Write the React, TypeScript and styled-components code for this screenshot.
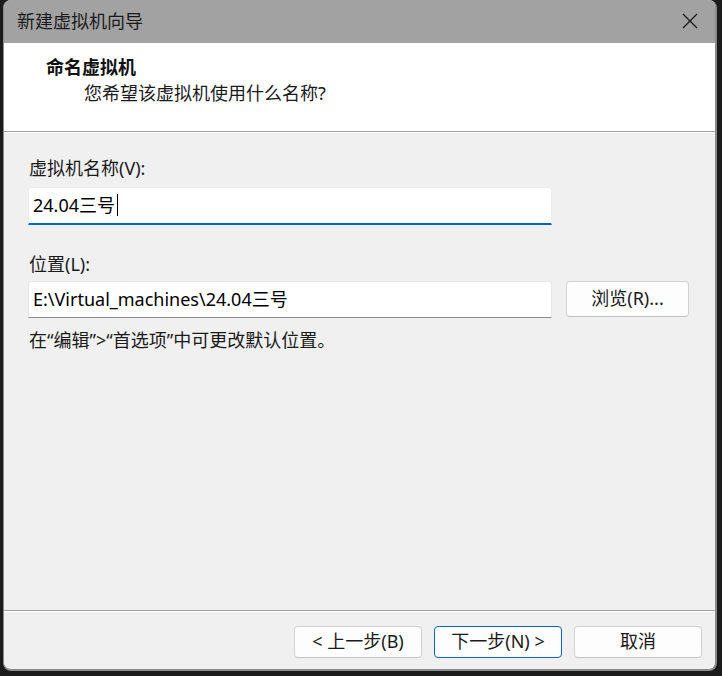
import styled, { createGlobalStyle } from 'styled-components';

const GlobalStyle = createGlobalStyle`
  html, body {
    margin: 0;
    padding: 0;
    background: #1b1b1b;
  }
  body {
    font-family: "Noto Sans", "Noto Sans CJK SC", sans-serif;
    color: #1a1a1a;
  }
`;

const Page = styled.div`
  width: 722px;
  height: 676px;
  padding-left: 3px;
  box-sizing: border-box;
`;

const Window = styled.div`
  width: 714px;
  height: 671px;
  box-sizing: border-box;
  display: flex;
  flex-direction: column;
  border: 1px solid #8a8a8a;
  border-right-width: 2px;
  border-bottom-width: 2px;
  border-top: none;
  border-radius: 8px;
  overflow: hidden;
  background: #f0f0f0;
`;

const TitleBar = styled.div`
  height: 43px;
  flex: none;
  display: flex;
  align-items: center;
  justify-content: space-between;
  padding: 0 17px 0 13px;
  background: #a2a2a2;
`;

const TitleText = styled.span`
  font-size: 18px;
  line-height: 24px;
  margin-top: -2px;
  color: #1a1a1a;
`;

const CloseButton = styled.button`
  width: 16px;
  height: 16px;
  padding: 0;
  margin-top: -1px;
  border: none;
  background: none;
  display: flex;
  align-items: center;
  justify-content: center;
`;

const Header = styled.div`
  flex: none;
  height: 88px;
  box-sizing: border-box;
  padding: 12px 0 0 42px;
  background: #ffffff;
  display: flex;
  flex-direction: column;
  gap: 2px;
`;

const HeaderTitle = styled.div`
  font-size: 18px;
  line-height: 24px;
  font-weight: 700;
  color: #111;
`;

const HeaderSubtitle = styled.div`
  font-size: 18px;
  line-height: 24px;
  padding-left: 38px;
  color: #1a1a1a;
`;

const Separator = styled.div`
  flex: none;
  height: 0;
  border-top: 1px solid #a0a0a0;
  border-bottom: 1px solid #ffffff;
`;

const Body = styled.div`
  flex: 1;
  padding: 23px 0 0 24px;
  display: flex;
  flex-direction: column;
`;

const Label = styled.div<{ $gap?: number }>`
  font-size: 18px;
  line-height: 24px;
  margin-top: ${p => p.$gap ?? 0}px;
  padding-left: 1px;
`;

const FieldRow = styled.div<{ $gap: number }>`
  display: flex;
  align-items: flex-start;
  gap: 14px;
  margin-top: ${p => p.$gap}px;
`;

const TextField = styled.div<{ $focused?: boolean }>`
  width: 524px;
  height: ${p => (p.$focused ? 38 : 37)}px;
  box-sizing: border-box;
  display: flex;
  align-items: center;
  padding: 0 0 1px 4px;
  background: #ffffff;
  border: 1px solid ${p => (p.$focused ? '#ececec' : '#e6e6e6')};
  border-bottom: ${p => (p.$focused ? '2px solid #0067c0' : '1px solid #8a8a8a')};
  border-radius: 3px 3px 0 0;
  font-size: 18px;
  line-height: 24px;
  color: #000;
  white-space: pre;
`;

const Caret = styled.span`
  display: inline-block;
  width: 1px;
  height: 22px;
  margin-left: 2px;
  background: #000;
`;

const Button = styled.button<{ $primary?: boolean }>`
  width: 128px;
  height: 32px;
  flex: none;
  box-sizing: border-box;
  border: 1px solid ${p => (p.$primary ? '#0067c0' : '#d2d2d2')};
  border-bottom-color: ${p => (p.$primary ? '#0067c0' : '#c2c2c2')};
  border-radius: 4px;
  background: #fdfdfd;
  font-family: "Noto Sans", "Noto Sans CJK SC", sans-serif;
  font-size: 18px;
  line-height: 24px;
  color: #1a1a1a;
  padding: 0 0 2px;
`;

const BrowseButton = styled(Button)`
  width: 123px;
  height: 36px;
`;

const Hint = styled.div`
  font-size: 18px;
  line-height: 24px;
  margin-top: 10px;
  padding-left: 1px;
`;

const Footer = styled.div`
  flex: none;
  height: 57px;
  box-sizing: border-box;
  padding: 14px 13px 0 0;
  display: flex;
  justify-content: flex-end;
  gap: 12px;
`;

function CloseIcon() {
  return (
    <svg width="16" height="16" viewBox="0 0 16 16" fill="none">
      <path d="M1 1L15 15M15 1L1 15" stroke="#1a1a1a" strokeWidth="1.3" />
    </svg>
  );
}

export default function App() {
  return (
    <>
      <GlobalStyle />
      <Page>
        <Window>
          <TitleBar>
            <TitleText>新建虚拟机向导</TitleText>
            <CloseButton aria-label="关闭">
              <CloseIcon />
            </CloseButton>
          </TitleBar>

          <Header>
            <HeaderTitle>命名虚拟机</HeaderTitle>
            <HeaderSubtitle>您希望该虚拟机使用什么名称?</HeaderSubtitle>
          </Header>
          <Separator />

          <Body>
            <Label>虚拟机名称(V):</Label>
            <FieldRow $gap={7}>
              <TextField $focused>
                24.04三号
                <Caret />
              </TextField>
            </FieldRow>

            <Label $gap={27}>位置(L):</Label>
            <FieldRow $gap={5}>
              <TextField>E:\Virtual_machines\24.04三号</TextField>
              <BrowseButton>浏览(R)...</BrowseButton>
            </FieldRow>

            <Hint>在“编辑”&gt;“首选项”中可更改默认位置。</Hint>
          </Body>

          <Separator />
          <Footer>
            <Button>&lt; 上一步(B)</Button>
            <Button $primary>下一步(N) &gt;</Button>
            <Button>取消</Button>
          </Footer>
        </Window>
      </Page>
    </>
  );
}
